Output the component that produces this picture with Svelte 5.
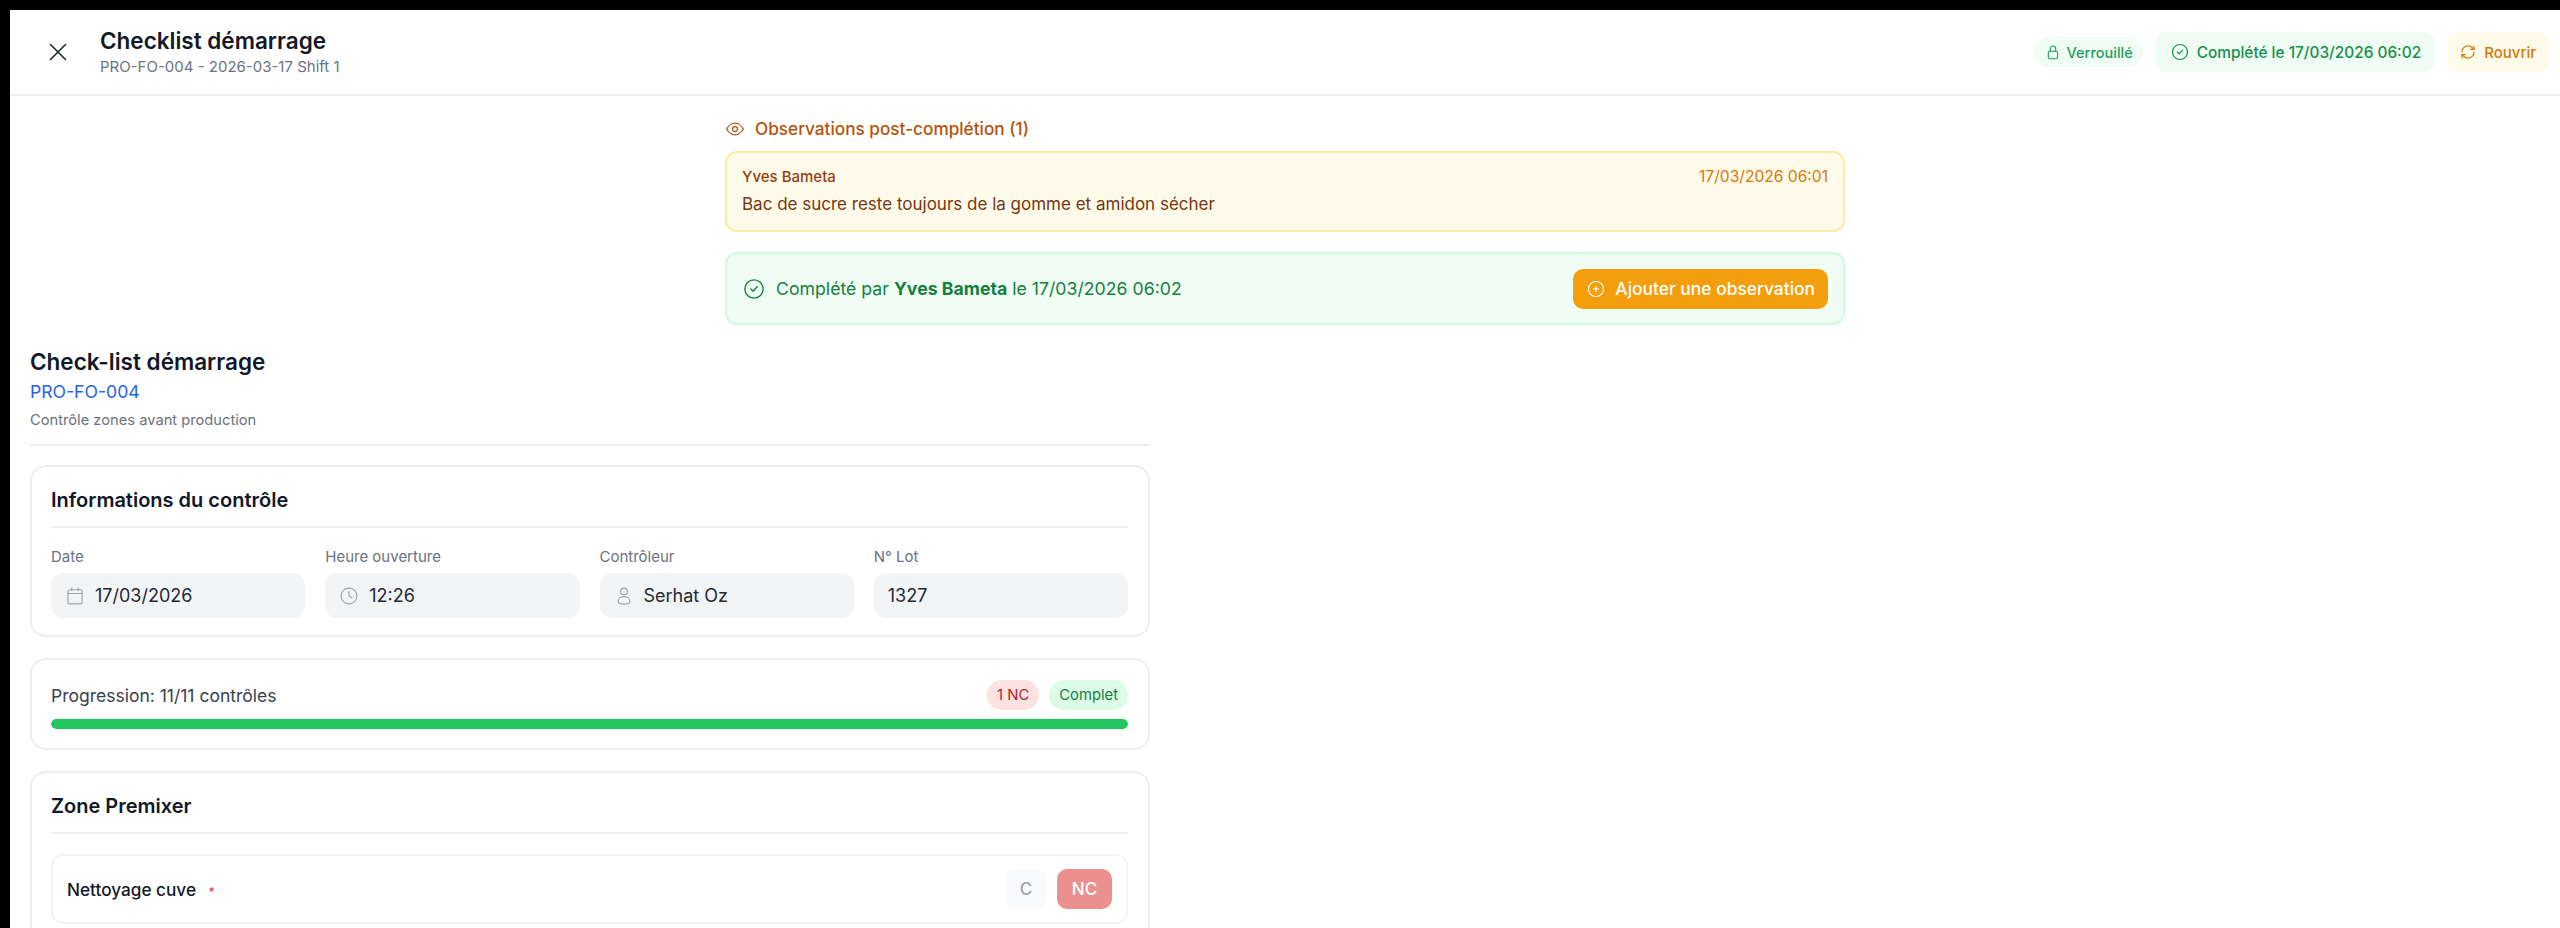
<script>
  const infos = [
    { label: 'Date', value: '17/03/2026', icon: 'calendar' },
    { label: 'Heure ouverture', value: '12:26', icon: 'clock' },
    { label: 'Contrôleur', value: 'Serhat Oz', icon: 'user' },
    { label: 'N° Lot', value: '1327', icon: null }
  ];
</script>

<div class="frame">
  <div class="page">
    <header class="topbar">
      <div class="topbar-left">
        <button class="close" aria-label="Fermer">
          <svg width="24" height="24" viewBox="0 0 24 24" fill="none" stroke="currentColor" stroke-width="1.6" stroke-linecap="round"><path d="M4.5 4.5l15 15M19.5 4.5l-15 15"/></svg>
        </button>
        <div>
          <h1>Checklist démarrage</h1>
          <p class="sub">PRO-FO-004 - 2026-03-17 Shift 1</p>
        </div>
      </div>
      <div class="topbar-right">
        <span class="pill locked">
          <svg width="16" height="16" viewBox="0 0 24 24" fill="none" stroke="currentColor" stroke-width="1.6" stroke-linecap="round" stroke-linejoin="round"><rect x="5" y="11" width="14" height="11" rx="2.5"/><path d="M8 11V7a4 4 0 0 1 8 0v4"/></svg>
          Verrouillé
        </span>
        <span class="pill done">
          <svg width="18" height="18" viewBox="0 0 24 24" fill="none" stroke="currentColor" stroke-width="1.6" stroke-linecap="round" stroke-linejoin="round"><circle cx="12" cy="12" r="10"/><path d="M8.5 12l2.5 2.5 4.5-5"/></svg>
          Complété le 17/03/2026 06:02
        </span>
        <button class="pill reopen">
          <svg width="16" height="16" viewBox="0 0 24 24" fill="none" stroke="currentColor" stroke-width="1.8" stroke-linecap="round" stroke-linejoin="round"><path d="M3 12a9 9 0 0 1 15-6.7L21 8"/><path d="M21 3v5h-5"/><path d="M21 12a9 9 0 0 1-15 6.7L3 16"/><path d="M8 16H3v5"/></svg>
          Rouvrir
        </button>
      </div>
    </header>

    <main class="content">
      <section class="post">
        <div class="post-title">
          <svg width="20" height="20" viewBox="0 0 24 24" fill="none" stroke="#b45309" stroke-width="1.5" stroke-linecap="round" stroke-linejoin="round"><path d="M2 12s3.6-7 10-7 10 7 10 7-3.6 7-10 7-10-7-10-7z"/><circle cx="12" cy="12" r="3"/></svg>
          Observations post-complétion (1)
        </div>
        <div class="obs">
          <div class="obs-head"><span class="obs-author">Yves Bameta</span><span class="obs-date">17/03/2026 06:01</span></div>
          <p>Bac de sucre reste toujours de la gomme et amidon sécher</p>
        </div>
        <div class="completed">
          <div class="completed-text">
            <svg width="22" height="22" viewBox="0 0 24 24" fill="none" stroke="currentColor" stroke-width="1.5" stroke-linecap="round" stroke-linejoin="round"><circle cx="12" cy="12" r="10"/><path d="M8.5 12l2.5 2.5 4.5-5"/></svg>
            <span>Complété par <strong>Yves Bameta</strong> le 17/03/2026 06:02</span>
          </div>
          <button class="add">
            <svg width="18" height="18" viewBox="0 0 24 24" fill="none" stroke="currentColor" stroke-width="1.6" stroke-linecap="round"><circle cx="12" cy="12" r="10"/><path d="M12 8.5v7M8.5 12h7"/></svg>
            Ajouter une observation
          </button>
        </div>
      </section>

      <section class="form">
        <div class="form-head">
          <h2>Check-list démarrage</h2>
          <div class="code">PRO-FO-004</div>
          <div class="desc">Contrôle zones avant production</div>
        </div>

        <div class="card">
          <h3>Informations du contrôle</h3>
          <div class="fields">
            {#each infos as f}
              <div class="field">
                <span class="field-label">{f.label}</span>
                <div class="field-box">
                  {#if f.icon === 'calendar'}
                    <svg width="20" height="20" viewBox="0 0 24 24" fill="none" stroke="#9ca3af" stroke-width="1.4" stroke-linecap="round" stroke-linejoin="round"><rect x="3.5" y="4.5" width="17" height="17" rx="2"/><path d="M3.5 9h17M8 2.5v3M16 2.5v3"/></svg>
                  {:else if f.icon === 'clock'}
                    <svg width="20" height="20" viewBox="0 0 24 24" fill="none" stroke="#9ca3af" stroke-width="1.4" stroke-linecap="round" stroke-linejoin="round"><circle cx="12" cy="12" r="9.5"/><path d="M12 6.5V12l3.5 2"/></svg>
                  {:else if f.icon === 'user'}
                    <svg width="20" height="20" viewBox="0 0 24 24" fill="none" stroke="#9ca3af" stroke-width="1.4" stroke-linecap="round" stroke-linejoin="round"><circle cx="12" cy="6.500" r="4"/><path d="M5 18c0-3 3-5.200 7-5.200s7 2.200 7 5.200c0 2.400-3 3.800-7 3.800s-7-1.400-7-3.800z"/></svg>
                  {/if}
                  <span>{f.value}</span>
                </div>
              </div>
            {/each}
          </div>
        </div>

        <div class="card progress">
          <div class="progress-row">
            <span class="progress-label">Progression: 11/11 contrôles</span>
            <div class="tags">
              <span class="tag red">1 NC</span>
              <span class="tag green">Complet</span>
            </div>
          </div>
          <div class="bar"><div class="bar-fill" style="width: 100%"></div></div>
        </div>

        <div class="card">
          <h3>Zone Premixer</h3>
          <div class="item">
            <span class="item-label">Nettoyage cuve <i>*</i></span>
            <div class="choices">
              <button class="choice c">C</button>
              <button class="choice nc">NC</button>
            </div>
          </div>
        </div>
      </section>
    </main>
  </div>
</div>

<style>
  :global(body) {
    margin: 0;
    background: #000;
  }

  .frame {
    height: 928px;
    box-sizing: border-box;
    padding: 10px 0 0 10px;
    overflow: hidden;
    font-family: Inter, "Liberation Sans", sans-serif;
    color: #111827;
  }

  .page {
    background: #fff;
    height: 918px;
    overflow: hidden;
  }

  h1, h2, h3, p {
    margin: 0;
  }

  button {
    font: inherit;
    border: 0;
    cursor: pointer;
  }

  .topbar {
    height: 86px;
    box-sizing: border-box;
    border-bottom: 2px solid #eceef1;
    display: flex;
    align-items: center;
    justify-content: space-between;
    padding: 0 11px 0 36px;
  }

  .topbar-left {
    display: flex;
    align-items: center;
    gap: 30px;
  }

  .close {
    background: none;
    padding: 0;
    display: flex;
    color: #1f2937;
  }

  h1 {
    font-size: 22.5px;
    line-height: 30px;
    font-weight: 600;
    color: #111827;
  }

  .sub {
    font-size: 15px;
    line-height: 22px;
    color: #6b7280;
  }

  .topbar-right {
    display: flex;
    align-items: center;
    gap: 12px;
  }

  .pill {
    display: inline-flex;
    align-items: center;
    gap: 8px;
    font-size: 15.4px;
    font-weight: 450;
    padding: 0 14px 0 16px;
    height: 40px;
    border-radius: 10px;
  }

  .pill.locked {
    height: 30px;
    padding: 0 10px 0 11px;
    gap: 6px;
    border-radius: 15px;
    background: #f0fdf4;
    color: #1f9d57;
    font-size: 14.5px;
  }

  .pill.done {
    background: #effdf5;
    color: #168f4a;
  }

  .pill.reopen {
    background: #fffbeb;
    color: #d97706;
    font-size: 15px;
    padding: 0 13px;
  }

  .content {
    padding: 22px 0 0 20px;
  }

  .post {
    width: 1120px;
    margin: 0 0 0 695px;
  }

  .post-title {
    display: flex;
    align-items: center;
    gap: 10px;
    font-size: 17.2px;
    font-weight: 450;
    color: #b45309;
    line-height: 22px;
    margin-bottom: 11px;
  }

  .obs {
    box-sizing: border-box;
    height: 81px;
    padding: 14px 15px;
    background: #fffbeb;
    border: 2px solid #fdeba6;
    border-radius: 12px;
  }

  .obs-head {
    display: flex;
    justify-content: space-between;
    font-size: 15px;
    line-height: 20px;
    margin-bottom: 5px;
  }

  .obs-author {
    font-weight: 500;
    color: #92400e;
  }

  .obs-date {
    color: #d97706;
    font-size: 15.6px;
  }

  .obs p {
    font-size: 17px;
    line-height: 24px;
    color: #78350f;
  }

  .completed {
    box-sizing: border-box;
    height: 73px;
    margin-top: 20px;
    display: flex;
    align-items: center;
    justify-content: space-between;
    padding: 0 15px 0 16px;
    background: #effdf5;
    border: 2px solid #d1fae5;
    border-radius: 12px;
  }

  .completed-text {
    display: flex;
    align-items: center;
    gap: 11px;
    font-size: 17.7px;
    color: #15803d;
  }

  .completed-text strong {
    font-weight: 700;
  }

  .add {
    display: inline-flex;
    align-items: center;
    gap: 10px;
    height: 40px;
    padding: 0 13px 0 14px;
    background: #f59e0b;
    color: #fff;
    border-radius: 10px;
    font-size: 17.4px;
    font-weight: 450;
  }

  .form {
    width: 1120px;
    margin-top: 22px;
  }

  .form-head {
    padding-bottom: 12px;
    border-bottom: 2px solid #eceef1;
  }

  h2 {
    font-size: 22.5px;
    line-height: 30px;
    font-weight: 600;
  }

  .code {
    font-size: 17.6px;
    line-height: 26px;
    margin-top: 2px;
    color: #2563eb;
  }

  .desc {
    font-size: 14.7px;
    line-height: 24px;
    margin-top: 3px;
    color: #6b7280;
  }

  .card {
    margin-top: 21px;
    padding: 19px 20px 17px 19px;
    background: #fff;
    border: 2px solid #eceef1;
    border-radius: 16px;
  }

  .form-head + .card {
    margin-top: 19px;
  }

  .card.progress {
    padding: 20px 20px 19px 19px;
  }

  h3 {
    font-size: 20px;
    line-height: 28px;
    font-weight: 600;
    padding-bottom: 12px;
    border-bottom: 2px solid #eceef1;
  }

  .fields {
    display: grid;
    grid-template-columns: repeat(4, 1fr);
    gap: 20px;
    margin-top: 19px;
  }

  .field-label {
    display: block;
    font-size: 15px;
    line-height: 20px;
    color: #6b7280;
    margin-bottom: 6px;
  }

  .field-box {
    display: flex;
    align-items: center;
    gap: 10px;
    height: 45px;
    padding: 0 14px;
    background: #f3f4f6;
    border-radius: 12px;
    font-size: 18px;
    color: #1f2937;
  }

  .progress-row {
    display: flex;
    align-items: center;
    justify-content: space-between;
    height: 30px;
    margin-bottom: 9px;
  }

  .progress-label {
    font-size: 17.5px;
    color: #374151;
  }

  .tags {
    display: flex;
    gap: 10px;
  }

  .tag {
    display: inline-flex;
    align-items: center;
    height: 30px;
    padding: 0 10px;
    border-radius: 15px;
    font-size: 14.8px;
  }

  .tag.red {
    background: #fee2e2;
    color: #b91c1c;
  }

  .tag.green {
    background: #dcfce7;
    color: #15803d;
  }

  .bar {
    height: 10px;
    border-radius: 5px;
    background: #e5e7eb;
    overflow: hidden;
  }

  .bar-fill {
    height: 100%;
    background: #22c55e;
    border-radius: 5px;
  }

  .item {
    margin-top: 20px;
    height: 70px;
    box-sizing: border-box;
    display: flex;
    align-items: center;
    justify-content: space-between;
    padding: 0 14px;
    border: 2px solid #f3f4f6;
    border-radius: 12px;
  }

  .item-label {
    font-size: 17.2px;
    font-weight: 450;
    color: #111827;
  }

  .item-label i {
    font-style: normal;
    color: #ef4444;
    margin-left: 8px;
    font-size: 12px;
  }

  .choices {
    display: flex;
    gap: 10px;
  }

  .choice {
    height: 40px;
    border-radius: 10px;
    font-size: 17px;
    font-weight: 450;
  }

  .choice.c {
    width: 42px;
    background: #f9fafb;
    color: #9ca3af;
  }

  .choice.nc {
    width: 55px;
    background: #ec8f8f;
    color: #fff;
  }
</style>
